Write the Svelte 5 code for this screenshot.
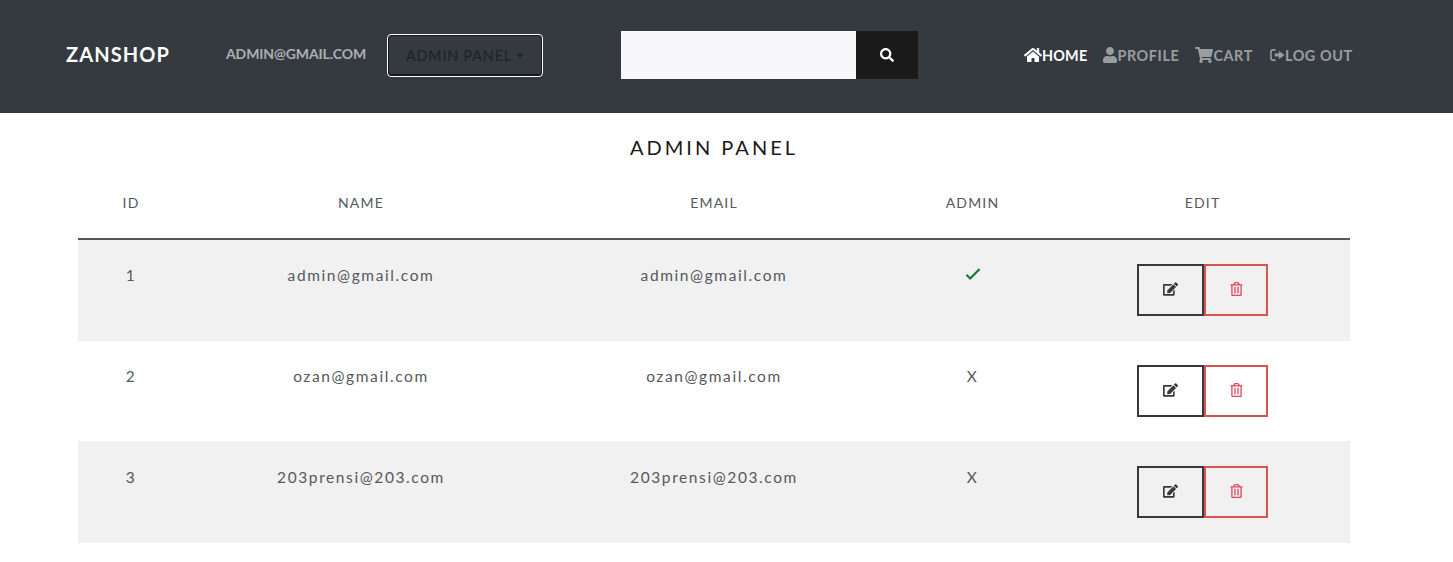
<script>
	const users = [
		{ id: 1, email: 'admin@gmail.com', admin: true },
		{ id: 2, email: 'ozan@gmail.com', admin: false },
		{ id: 3, email: '203prensi@203.com', admin: false }
	];
</script>

<header class="navbar">
	<a class="brand" href="#home">ZANSHOP</a>
	<span class="user-email">ADMIN@GMAIL.COM</span>
	<button class="panel-toggle">ADMIN PANEL<span class="caret"></span></button>
	<form class="search" on:submit|preventDefault>
		<input type="text" aria-label="Search" />
		<button type="submit" aria-label="Search">
			<svg viewBox="0 0 512 512" width="14" height="14"><path fill="#fff" d="M505 442.700L405.300 343c-4.500-4.500-10.600-7-17-7H372c27.600-35.300 44-79.700 44-128C416 93.100 322.900 0 208 0S0 93.100 0 208s93.100 208 208 208c48.300 0 92.700-16.400 128-44v16.300c0 6.400 2.500 12.500 7 17l99.700 99.700c9.400 9.400 24.600 9.400 33.900 0l28.300-28.300c9.400-9.400 9.400-24.600.1-34zM208 336c-70.700 0-128-57.200-128-128 0-70.700 57.200-128 128-128 70.700 0 128 57.200 128 128 0 70.700-57.200 128-128 128z"/></svg>
		</button>
	</form>
	<nav class="links">
		<a class="active" href="#home">
			<svg viewBox="0 0 576 512" width="18" height="16"><path fill="currentColor" d="M280.400 148.300L96 300.100V464a16 16 0 0 0 16 16l112.100-.3a16 16 0 0 0 15.900-16V368a16 16 0 0 1 16-16h64a16 16 0 0 1 16 16v95.600a16 16 0 0 0 16 16.100L464 480a16 16 0 0 0 16-16V300L295.700 148.300a12.200 12.200 0 0 0-15.300 0zM571.600 251.500L488 182.600V44.100a12 12 0 0 0-12-12h-56a12 12 0 0 0-12 12v72.600L318.500 43a48 48 0 0 0-61 0L4.300 251.500a12 12 0 0 0-1.600 16.900l25.500 31A12 12 0 0 0 45.200 301l235.200-193.700a12.200 12.200 0 0 1 15.300 0L530.900 301a12 12 0 0 0 16.900-1.600l25.500-31a12 12 0 0 0-1.700-16.900z"/></svg>HOME
		</a>
		<a href="#profile">
			<svg viewBox="0 0 448 512" width="14" height="16"><path fill="currentColor" d="M224 256c70.700 0 128-57.300 128-128S294.700 0 224 0 96 57.300 96 128s57.300 128 128 128zm89.600 32h-16.700c-22.200 10.200-46.900 16-72.900 16s-50.600-5.800-72.900-16h-16.700C60.200 288 0 348.200 0 422.400V464c0 26.500 21.500 48 48 48h352c26.500 0 48-21.500 48-48v-41.600c0-74.200-60.200-134.400-134.400-134.400z"/></svg>PROFILE
		</a>
		<a href="#cart">
			<svg viewBox="0 0 576 512" width="18" height="16"><path fill="currentColor" d="M528.100 301.300l47.300-208C578.800 78.300 567.400 64 552 64H159.200l-9.200-44.800C147.800 8 137.900 0 126.500 0H24C10.700 0 0 10.700 0 24v16c0 13.300 10.700 24 24 24h69.900l70.200 343.400C147.300 417.100 136 435.200 136 456c0 30.900 25.100 56 56 56s56-25.100 56-56c0-15.700-6.400-29.800-16.800-40h209.600C430.400 426.200 424 440.300 424 456c0 30.900 25.100 56 56 56s56-25.100 56-56c0-22.200-12.900-41.300-31.600-50.400l5.500-24.300c3.400-15-8-29.300-23.400-29.300H218.100l-6.500-32h293.100c11.200 0 20.900-7.800 23.400-18.700z"/></svg>CART
		</a>
		<a href="#logout">
			<svg viewBox="0 0 16 16" width="15" height="16"><path fill="none" stroke="currentColor" stroke-width="1.7" d="M6 2.500H3a2 2 0 0 0-2 2v7a2 2 0 0 0 2 2h3"/><path fill="currentColor" d="M5 6.500h4.500V3.600L15.500 8l-6 4.400V9.500H5z"/></svg>LOG OUT
		</a>
	</nav>
</header>

<main>
	<h1>ADMIN PANEL</h1>
	<table>
		<colgroup>
			<col class="c-id" /><col class="c-name" /><col class="c-email" /><col class="c-admin" /><col />
		</colgroup>
		<thead>
			<tr><th>ID</th><th>NAME</th><th>EMAIL</th><th>ADMIN</th><th>EDIT</th></tr>
		</thead>
		<tbody>
			{#each users as u}
				<tr>
					<td>{u.id}</td>
					<td>{u.email}</td>
					<td>{u.email}</td>
					<td>
						{#if u.admin}
							<svg class="check" viewBox="0 0 512 512" width="16" height="16"><path fill="#0b7a2a" d="M435.800 83.700L164 355.500 76.200 267.700c-4.700-4.700-12.300-4.700-17 0l-28.300 28.300c-4.700 4.700-4.700 12.300 0 17l124.600 124.600c4.700 4.700 12.300 4.700 17 0l309.900-309.900c4.700-4.700 4.700-12.300 0-17l-28.300-28.300c-4.700-4.400-12.300-4.400-17.300.3z"/></svg>
						{:else}
							X
						{/if}
					</td>
					<td>
						<div class="actions">
							<button class="btn-edit" aria-label="Edit">
								<svg viewBox="0 0 576 512" width="15" height="14"><path fill="#343a40" d="M402.600 83.200l90.200 90.200c3.800 3.800 3.800 10 0 13.800L274.400 405.600l-92.800 10.300c-12.400 1.400-22.900-9.100-21.500-21.500l10.300-92.800L388.800 83.200c3.800-3.800 10-3.800 13.800 0zm162-22.900l-48.800-48.800c-15.200-15.200-39.900-15.200-55.200 0l-35.400 35.400c-3.800 3.800-3.800 10 0 13.800l90.200 90.200c3.800 3.800 10 3.800 13.800 0l35.400-35.400c15.200-15.300 15.200-40 0-55.200zM384 346.200V448H64V128h229.800c3.200 0 6.200-1.300 8.500-3.500l40-40c7.600-7.600 2.200-20.500-8.500-20.500H48C21.500 64 0 85.500 0 112v352c0 26.500 21.500 48 48 48h352c26.500 0 48-21.500 48-48V306.200c0-10.700-12.900-16-20.500-8.500l-40 40c-2.200 2.300-3.500 5.300-3.500 8.500z"/></svg>
							</button>
							<button class="btn-del" aria-label="Delete">
								<svg viewBox="0 0 448 512" width="13" height="14"><path fill="#e2455f" d="M268 416h24a12 12 0 0 0 12-12V188a12 12 0 0 0-12-12h-24a12 12 0 0 0-12 12v216a12 12 0 0 0 12 12zM432 80h-82.400l-34-56.700A48 48 0 0 0 274.400 0H173.600a48 48 0 0 0-41.200 23.300L98.400 80H16A16 16 0 0 0 0 96v16a16 16 0 0 0 16 16h16v336a48 48 0 0 0 48 48h288a48 48 0 0 0 48-48V128h16a16 16 0 0 0 16-16V96a16 16 0 0 0-16-16zM171.800 50.900A6 6 0 0 1 177 48h94a6 6 0 0 1 5.100 2.900L293.600 80H154.400zM368 464H80V128h288zm-212-48h24a12 12 0 0 0 12-12V188a12 12 0 0 0-12-12h-24a12 12 0 0 0-12 12v216a12 12 0 0 0 12 12z"/></svg>
							</button>
						</div>
					</td>
				</tr>
			{/each}
		</tbody>
	</table>
</main>

<style>
	:global(body) {
		margin: 0;
		background: #fff;
		font-family: Lato, "Noto Sans", sans-serif;
	}

	.navbar {
		display: flex;
		align-items: center;
		height: 113px;
		padding: 0 0 3px 66px;
		background: #343a40;
		box-sizing: border-box;
	}

	.brand {
		font-size: 20px;
		font-weight: 700;
		letter-spacing: 1.1px;
		color: #fff;
		text-decoration: none;
		width: 160px;
		margin-top: -3px;
	}

	.user-email {
		font-size: 14px;
		font-weight: 700;
		letter-spacing: -0.1px;
		color: rgba(255, 255, 255, 0.6);
		width: 161px;
		margin-top: -3px;
	}

	.panel-toggle {
		width: 156px;
		height: 43px;
		padding: 0;
		margin: 1px 78px 0 0;
		border: 1px solid #fff;
		box-shadow: inset 0 0 0 1px #16191c, inset 0 -2px 0 0 #16191c;
		border-radius: 4px;
		background: #343a40;
		color: #1f2225;
		font: inherit;
		font-size: 14.4px;
		letter-spacing: 0.8px;
	}

	.caret {
		display: inline-block;
		margin-left: 4px;
		vertical-align: 3px;
		border-top: 4px solid #212529;
		border-left: 4px solid transparent;
		border-right: 4px solid transparent;
	}

	.search {
		display: flex;
		width: 297px;
		height: 48px;
		margin: 0;
	}

	.search input {
		width: 235px;
		padding: 0;
		border: 0;
		background: #f7f7f9;
		box-sizing: border-box;
	}

	.search button {
		width: 62px;
		border: 0;
		padding: 0;
		background: #1a1a1a;
		display: flex;
		align-items: center;
		justify-content: center;
	}

	.links {
		display: flex;
		gap: 16px;
		margin-left: 106px;
	}

	.links a {
		display: flex;
		align-items: center;
		font-size: 14.4px;
		font-weight: 700;
		letter-spacing: 0.6px;
		color: rgba(255, 255, 255, 0.5);
		text-decoration: none;
	}

	.links a.active {
		color: #fff;
		letter-spacing: 0.2px;
	}

	.links a:last-child {
		margin-left: 1px;
	}

	main {
		width: 1272px;
		margin-left: 78px;
		color: #55595c;
	}

	h1 {
		margin: 0;
		padding-top: 22px;
		height: 33px;
		font-size: 20px;
		line-height: 25px;
		font-weight: 400;
		letter-spacing: 3px;
		text-align: center;
		color: #1a1a1a;
		box-sizing: content-box;
	}

	table {
		width: 100%;
		border-collapse: separate;
		border-spacing: 0;
		table-layout: fixed;
		font-size: 15.5px;
		letter-spacing: 1.6px;
	}

	.c-id { width: 106px; }
	.c-name { width: 354px; }
	.c-email { width: 352px; }
	.c-admin { width: 165px; }

	th {
		height: 72px;
		padding: 12px 12px 14px;
		font-size: 14px;
		font-weight: 400;
		letter-spacing: 1.2px;
		border-bottom: 2px solid #55595c;
		box-sizing: border-box;
	}

	td {
		height: 101px;
		padding: 24px 12px 12px;
		text-align: center;
		vertical-align: top;
		box-sizing: border-box;
		line-height: 22px;
	}

	tbody tr:nth-child(2) td {
		height: 100px;
	}

	tbody tr:nth-child(3) td {
		height: 102px;
		padding-top: 25px;
	}

	tbody tr:nth-child(odd) {
		background: #f1f1f1;
	}

	.actions {
		display: flex;
		justify-content: center;
	}

	.check {
		vertical-align: -1px;
	}

	.actions button {
		height: 52px;
		padding: 0 0 2px;
		background: transparent;
		display: flex;
		align-items: center;
		justify-content: center;
		box-sizing: border-box;
	}

	.btn-edit {
		width: 67px;
		border: 2px solid #343a40;
	}

	.btn-del {
		width: 64px;
		border: 2px solid #d9534f;
	}
</style>
